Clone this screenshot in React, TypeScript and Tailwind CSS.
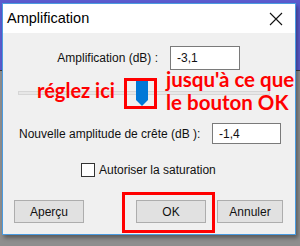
// Amplification dialog with red annotations
import React from "react";

const ui = { fontFamily: '"Liberation Sans", Arial, sans-serif' };
const note = { fontFamily: 'Lato, "Liberation Sans", sans-serif' };

const App: React.FC = () => {
	return (
		<div className="relative w-[300px] h-[246px] overflow-hidden flex flex-col" style={ui}>
			{/* desktop behind the window */}
			<div className="h-[70px] bg-[#5b5bce]"></div>
			<div className="h-px bg-[#3a3a3a]"></div>
			<div className="flex-1 bg-[#8e8e8e]"></div>

			{/* dialog window */}
			<div className="absolute left-[2px] top-[3px] w-[294px] h-[232px] border border-[#4a9be0] flex flex-col shadow-[2px_3px_4px_rgba(0,0,0,0.35)]">
				{/* title bar */}
				<div className="h-[29px] bg-white flex items-center justify-between pl-[4px] pr-[10px]">
					<span className="text-[14.5px] text-black leading-none">Amplification</span>
					<svg width="14" height="14" viewBox="0 0 14 14" className="mr-[2px]">
						<path d="M1 1 L13 13 M13 1 L1 13" stroke="#111" strokeWidth="1.1" />
					</svg>
				</div>

				{/* body */}
				<div className="flex-1 bg-[#f0f0f0] flex flex-col text-[12px] text-[#111]">
					<div className="mt-[13px] h-[24px] flex items-center">
						<span className="w-[155px] text-right">Amplification (dB) :</span>
						<div className="ml-[12px] w-[70px] h-[24px] bg-white border border-[#7a7a7a] flex items-center pl-[6px]">-3,1</div>
					</div>

					{/* slider */}
					<div className="relative mt-[10px] h-[26px] flex items-center">
						<div className="ml-[15px] w-[252px] h-[4px] bg-[#e7e7e7] border border-[#d6d6d6]"></div>
						<svg width="12" height="26" viewBox="0 0 12 26" className="absolute left-[133px] top-0">
							<path d="M0 0 H12 V20 L6 26 L0 20 Z" fill="#0078d7" />
						</svg>
					</div>

					<div className="mt-[17px] h-[21px] flex items-center">
						<span className="ml-[16px]">Nouvelle amplitude de crête (dB ):</span>
						<div className="ml-auto mr-[14px] w-[69px] h-[21px] bg-white border border-[#7a7a7a] flex items-center pl-[6px]">-1,4</div>
					</div>

					<div className="mt-[19px] h-[14px] flex items-center">
						<div className="ml-[78px] w-[14px] h-[14px] bg-white border border-[#333]"></div>
						<span className="ml-[4px]">Autoriser la saturation</span>
					</div>

					<div className="mt-[23px] h-[23px] flex items-center">
						<button className="ml-[11px] w-[70px] h-[23px] bg-[#e1e1e1] border border-[#adadad] text-[12px]">Aperçu</button>
						<button className="ml-[52px] w-[70px] h-[23px] bg-[#e1e1e1] border border-[#adadad] text-[12px]">OK</button>
						<button className="ml-[11px] w-[66px] h-[23px] bg-[#e1e1e1] border border-[#adadad] text-[12px]">Annuler</button>
					</div>
				</div>
			</div>

			{/* red annotations */}
			<div className="absolute left-[124px] top-[78px] w-[33px] h-[31px] border-[3px] border-[#ff0000]"></div>
			<div className="absolute left-[122px] top-[192px] w-[93px] h-[41px] border-[3px] border-[#ff0000]"></div>
			<span className="absolute left-[37px] top-[80px] text-[20px] font-bold text-[#ff0000] leading-none" style={note}>réglez ici</span>
			<div className="absolute left-[166px] top-[68px] text-[20.5px] font-bold text-[#ff0000] leading-[23px] whitespace-nowrap" style={note}>
				<div>jusqu'à ce que</div>
				<div>le bouton OK</div>
			</div>
		</div>
	);
};

export default App;
